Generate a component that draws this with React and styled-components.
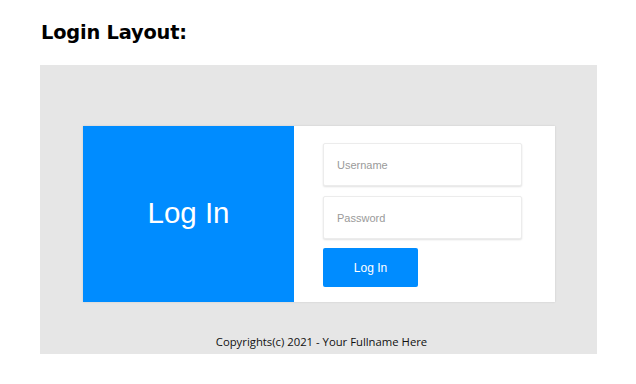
import React from "react";
import styled, { createGlobalStyle } from "styled-components";

const GlobalStyle = createGlobalStyle`
    body {
        margin: 0;
        background: #ffffff;
        font-family: "Liberation Sans", Arial, sans-serif;
    }
`

const App = () => {
    return (
        <StPage>
            <GlobalStyle />
            <StHeading>Login Layout:</StHeading>
            <StStage>
                <StCard>
                    <StBanner>Log In</StBanner>
                    <StForm onSubmit={(e) => e.preventDefault()}>
                        <StInput type="text" placeholder="Username" />
                        <StInput type="password" placeholder="Password" />
                        <StButton>Log In</StButton>
                    </StForm>
                </StCard>
                <StFooter>Copyrights(c) 2021 - Your Fullname Here</StFooter>
            </StStage>
        </StPage>
    )
}

export default App;

const StPage = styled.div`
    width: 636px;
    height: 384px;
    padding: 19px 0 0 40px;
    box-sizing: border-box;
`
const StHeading = styled.h1`
    margin: 0 0 0 1px;
    height: 46px;
    font-family: "DejaVu Sans", sans-serif;
    font-weight: bold;
    font-size: 19.4px;
    line-height: 28px;
    color: #000;
    letter-spacing: -0.2px;
`
const StStage = styled.div`
    width: 557px;
    height: 289px;
    background: #e6e6e6;
    padding: 61px 0 0 43px;
    box-sizing: border-box;
`
const StCard = styled.div`
    display: flex;
    width: 472px;
    height: 176px;
    background: #fff;
    box-shadow: 0 0 2px rgba(0, 0, 0, 0.12);
`
const StBanner = styled.div`
    width: 211px;
    background: #008cff;
    color: #fff;
    display: flex;
    align-items: center;
    justify-content: center;
    font-family: "Liberation Sans", Arial, sans-serif;
    font-size: 29.5px;
    padding-bottom: 2px;
    box-sizing: border-box;
`
const StForm = styled.form`
    display: flex;
    flex-direction: column;
    padding: 17px 0 0 29px;
    gap: 10px;
`
const StInput = styled.input`
    width: 199px;
    height: 43px;
    box-sizing: border-box;
    border: 1px solid #ececec;
    border-radius: 2px;
    box-shadow: 0 1px 2px rgba(0, 0, 0, 0.12);
    padding: 0 13px;
    font-family: "Liberation Sans", Arial, sans-serif;
    font-size: 11px;
    color: #333;
    outline: none;
    &::placeholder {
        color: #9a9a9a;
    }
`
const StButton = styled.button`
    width: 95px;
    height: 39px;
    margin-top: -1px;
    border: none;
    border-radius: 2px;
    background: #008cff;
    color: #fff;
    font-family: "Liberation Sans", Arial, sans-serif;
    font-size: 12px;
    cursor: pointer;
`
const StFooter = styled.div`
    width: 557px;
    margin: 32px 0 0 -43px;
    text-align: center;
    font-family: "Open Sans", sans-serif;
    font-size: 11.3px;
    color: #111;
    padding-left: 6px;
    box-sizing: border-box;
`
